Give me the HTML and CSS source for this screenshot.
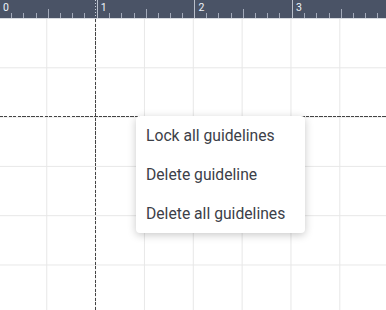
FILE: index.html
```html
<!DOCTYPE html>
<html lang="en">
<head>
  <meta charset="UTF-8">
  <meta name="viewport" content="width=device-width, initial-scale=1.0">
  <title>Guidelines</title>
  <link rel="stylesheet" href="styles.css">
</head>
<body>
  <div class="editor">
    <div class="ruler">
      <div class="unit"><span>0</span></div>
      <div class="unit"><span>1</span></div>
      <div class="unit"><span>2</span></div>
      <div class="unit"><span>3</span></div>
    </div>
    <div class="canvas"></div>

    <!-- guidelines sit over the canvas -->
    <div class="guide guide-v"></div>
    <div class="guide guide-h"></div>

    <ul class="menu">
      <li>Lock all guidelines</li>
      <li>Delete guideline</li>
      <li>Delete all guidelines</li>
    </ul>
  </div>
</body>
</html>
```

FILE: styles.css
```css
html, body {
  margin: 0;
  height: 100%;
}

body {
  font-family: Roboto, 'Liberation Sans', sans-serif;
  background: #fff;
  overflow: hidden;
}

.editor {
  position: relative;
  height: 310px;
  display: flex;
  flex-direction: column;
}

/* Ruler */
.ruler {
  display: flex;
  height: 18px;
  flex-shrink: 0;
  background-color: #4a5366;
  border-bottom: 1px solid #d6d9df;
  margin-left: -1px;
  overflow: hidden;
}

.unit {
  flex: 0 0 97.7px;
  box-sizing: border-box;
  border-left: 1px solid #b9bfcb;
  background:
    linear-gradient(#a3aaba, #a3aaba) no-repeat 47.9px 9px / 1px 9px,
    repeating-linear-gradient(90deg, transparent 0, transparent 11.2px, #a3aaba 11.2px, #a3aaba 12.2px) no-repeat 0 13px / 100% 5px;
}

.unit span {
  display: block;
  padding: 3px 0 0 3px;
  font-size: 10.5px;
  line-height: 10px;
  color: #eef3fb;
}

/* Canvas grid */
.canvas {
  flex: 1;
  background-color: #fff;
  background-image:
    linear-gradient(90deg, #e7e7e7 1px, transparent 1px),
    linear-gradient(#e7e7e7 1px, transparent 1px);
  background-size: 48.85px 49.3px;
  background-position: -2.6px -1px;
}

/* Guidelines */
.guide {
  position: absolute;
}

.guide-v {
  left: 94.5px;
  top: 0;
  bottom: 0;
  width: 1.5px;
  background:
    repeating-linear-gradient(180deg, #c9ced8 0, #c9ced8 1.5px, transparent 1.5px, transparent 3px) no-repeat 0 0 / 100% 18px,
    repeating-linear-gradient(180deg, #444 0, #444 3px, transparent 3px, transparent 4.5px) no-repeat 0 19px / 100% 100%;
}

.guide-h {
  top: 115.5px;
  left: 0;
  right: 0;
  height: 1.5px;
  background: repeating-linear-gradient(90deg, #444 0, #444 3px, transparent 3px, transparent 4.5px);
}

/* Context menu */
.menu {
  position: absolute;
  left: 136px;
  top: 116px;
  width: 169px;
  margin: 0;
  padding: 0;
  list-style: none;
  background: #fff;
  border-radius: 4px;
  box-shadow: 0 2px 8px rgba(0, 0, 0, 0.22);
}

.menu li {
  height: 39px;
  line-height: 40px;
  padding-left: 10px;
  font-size: 15.7px;
  color: #3c4048;
  cursor: pointer;
}
```
